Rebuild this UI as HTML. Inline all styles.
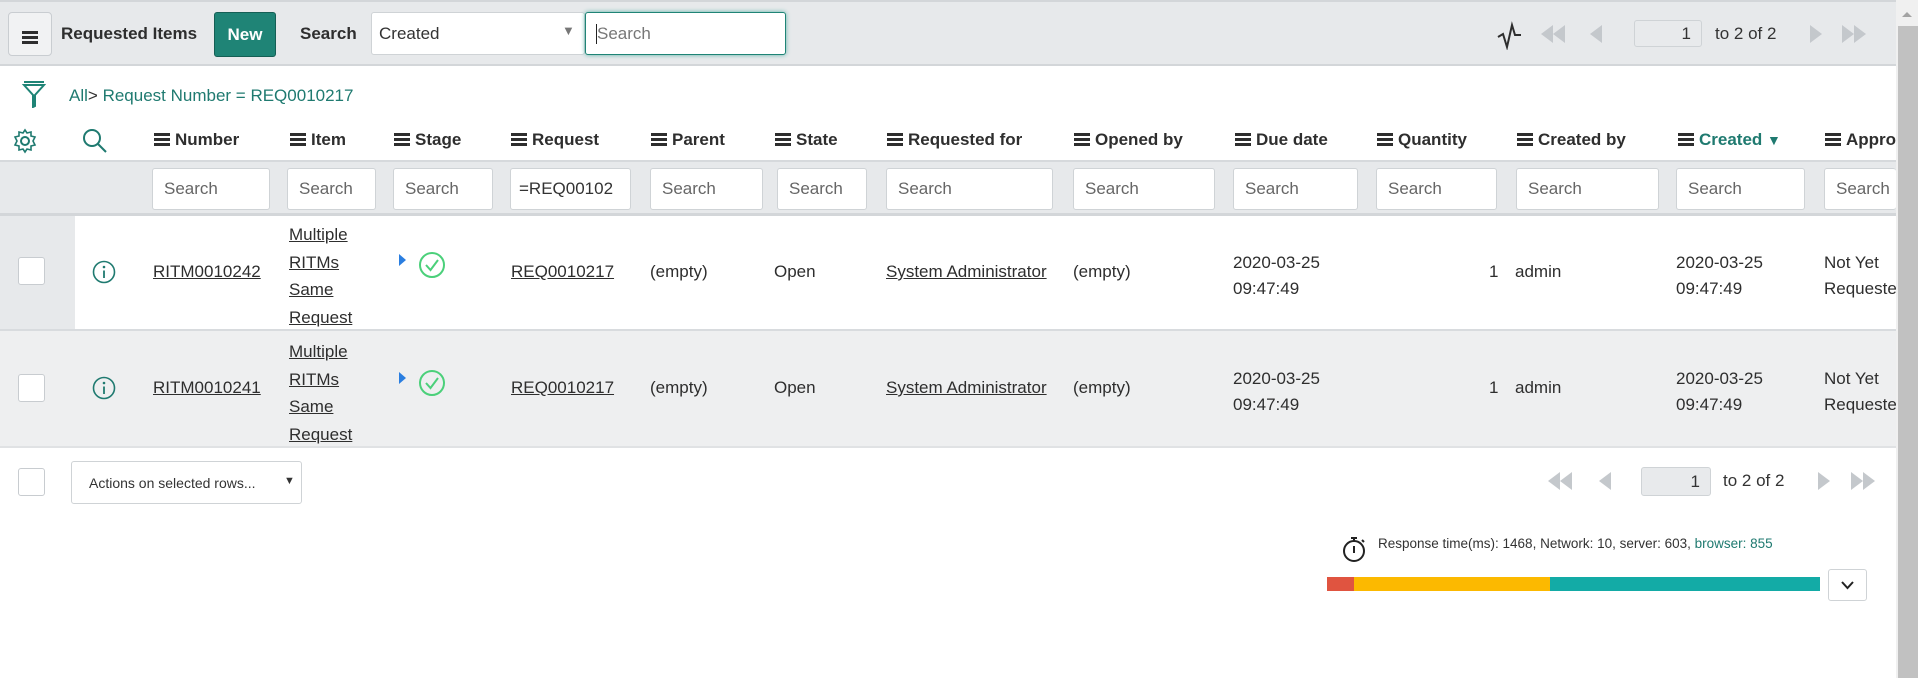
<!DOCTYPE html>
<html><head><meta charset="utf-8"><style>
*{box-sizing:border-box;margin:0;padding:0}
body{width:1918px;height:678px;overflow:hidden;background:#fff;font-family:"Liberation Sans",Arial,sans-serif;color:#2e2e2e;font-size:17px;position:relative}
.a{position:absolute;white-space:nowrap}
.inp{position:absolute;background:#fff;border:1px solid #cfd3d6;border-radius:3px;color:#666;font-size:17px;padding-left:11px;display:flex;align-items:center;white-space:nowrap}
.hb{display:inline-block;width:16px;height:13px;border-top:3px solid #2e2e2e;border-bottom:3px solid #2e2e2e;position:relative;margin-right:5px;vertical-align:-1px}
.hb:after{content:"";position:absolute;left:0;right:0;top:2px;height:3px;background:#2e2e2e}
.th{position:absolute;top:130px;font-weight:bold;font-size:17px;white-space:nowrap}
u{text-decoration:underline}
.cb{position:absolute;width:27px;height:28px;border:1px solid #c8ccd0;border-radius:3px;background:#fff}
.tri{position:absolute;width:0;height:0;border-top:9px solid transparent;border-bottom:9px solid transparent}
</style></head><body>
<!-- top bar -->
<div class="a" style="left:0;top:0;width:1896px;height:66px;background:#e7e9eb;border-top:2px solid #d3d6d9;border-bottom:2px solid #d3d6d9"></div>
<div class="a" style="left:8px;top:12px;width:44px;height:44px;border:1px solid #c9cdd1;border-radius:4px;background:#f1f2f3"></div>
<div class="a" style="left:22px;top:28px"><span class="hb"></span></div>
<div class="a" style="left:61px;top:24px;font-weight:bold">Requested Items</div>
<div class="a" style="left:214px;top:12px;width:62px;height:45px;background:#1f8476;border:1px solid #155f55;border-radius:3px;color:#fff;font-weight:bold;display:flex;align-items:center;justify-content:center">New</div>
<div class="a" style="left:300px;top:24px;font-weight:bold">Search</div>
<div class="inp" style="left:371px;top:12px;width:214px;height:43px;color:#333;padding-left:7px">Created<span class="a" style="left:190px;top:10px;color:#777;font-size:13px">▼</span></div>
<div class="inp" style="left:585px;top:12px;width:201px;height:43px;border:1px solid #1f8476;box-shadow:0 0 5px #5bb3a8;color:#777;padding-left:10px"><span style="border-left:1px solid #222;height:20px;margin-right:0"></span>Search</div>
<svg class="a" style="left:1496px;top:20px" width="30" height="30" viewBox="0 0 30 30"><path d="M2 17 L7 14 L11 27 L16 5 L19 15 L25 15" fill="none" stroke="#2e2e2e" stroke-width="2"/></svg>
<div class="tri" style="left:1541px;top:25px;border-right:12px solid #c4c8cc"></div>
<div class="tri" style="left:1553px;top:25px;border-right:12px solid #c4c8cc"></div>
<div class="tri" style="left:1590px;top:25px;border-right:12px solid #c4c8cc"></div>
<div class="inp" style="left:1634px;top:20px;width:68px;height:27px;background:#e8eaec;justify-content:flex-end;padding-right:10px;color:#333">1</div>
<div class="a" style="left:1715px;top:24px;color:#333">to 2 of 2</div>
<div class="tri" style="left:1810px;top:25px;border-left:12px solid #c4c8cc"></div>
<div class="tri" style="left:1842px;top:25px;border-left:12px solid #c4c8cc"></div>
<div class="tri" style="left:1854px;top:25px;border-left:12px solid #c4c8cc"></div>
<!-- scrollbar -->
<div class="a" style="left:1896px;top:0;width:22px;height:678px;background:#f0f0f0"></div>
<div class="a" style="left:1898px;top:26px;width:20px;height:652px;background:#c1c1c1"></div>
<div class="a" style="left:1902px;top:12px;width:0;height:0;border-left:5px solid transparent;border-right:5px solid transparent;border-bottom:5px solid #a3a3a3"></div>
<!-- breadcrumb -->
<svg class="a" style="left:22px;top:80px" width="24" height="28" viewBox="0 0 24 28"><path d="M2 2 H22 M2 5 H22 L13 15 V26 L11 27 V15 Z" fill="none" stroke="#1f8476" stroke-width="2"/></svg>
<div class="a" style="left:69px;top:86px;color:#1f7a70;font-size:17px">All<span style="color:#333">&gt;</span> Request Number = REQ0010217</div>
<!-- header -->
<svg class="a" style="left:12px;top:128px" width="26" height="26" viewBox="0 0 26 26"><circle cx="13" cy="13" r="4" fill="none" stroke="#1f7a70" stroke-width="2"/><path d="M13 2 L15 5 L19 4 L19 8 L23 9 L21 13 L23 17 L19 18 L19 22 L15 21 L13 24 L11 21 L7 22 L7 18 L3 17 L5 13 L3 9 L7 8 L7 4 L11 5 Z" fill="none" stroke="#1f7a70" stroke-width="1.6"/></svg>
<svg class="a" style="left:81px;top:127px" width="28" height="28" viewBox="0 0 28 28"><circle cx="11" cy="11" r="8" fill="none" stroke="#1f7a70" stroke-width="2"/><path d="M17 17 L25 25" stroke="#1f7a70" stroke-width="2"/></svg>
<div class="th" style="left:154px"><span class="hb"></span>Number</div>
<div class="th" style="left:290px"><span class="hb"></span>Item</div>
<div class="th" style="left:394px"><span class="hb"></span>Stage</div>
<div class="th" style="left:511px"><span class="hb"></span>Request</div>
<div class="th" style="left:651px"><span class="hb"></span>Parent</div>
<div class="th" style="left:775px"><span class="hb"></span>State</div>
<div class="th" style="left:887px"><span class="hb"></span>Requested for</div>
<div class="th" style="left:1074px"><span class="hb"></span>Opened by</div>
<div class="th" style="left:1235px"><span class="hb"></span>Due date</div>
<div class="th" style="left:1377px"><span class="hb"></span>Quantity</div>
<div class="th" style="left:1517px"><span class="hb"></span>Created by</div>
<div class="th" style="left:1678px;color:#1f7a70"><span class="hb"></span>Created <span style="font-size:14px">▼</span></div>
<div class="th" style="left:1825px;width:71px;overflow:hidden"><span class="hb"></span>Approval</div>
<!-- filter row -->
<div class="a" style="left:0;top:160px;width:1896px;height:56px;background:#e7e9eb;border-top:2px solid #d6d9dc;border-bottom:3px solid #d3d6d9"></div>
<div class="inp" style="left:152px;top:168px;width:118px;height:42px">Search</div>
<div class="inp" style="left:287px;top:168px;width:89px;height:42px">Search</div>
<div class="inp" style="left:393px;top:168px;width:100px;height:42px">Search</div>
<div class="inp" style="left:510px;top:168px;width:121px;height:42px;color:#333;padding-left:8px;overflow:hidden">=REQ00102</div>
<div class="inp" style="left:650px;top:168px;width:113px;height:42px">Search</div>
<div class="inp" style="left:777px;top:168px;width:90px;height:42px">Search</div>
<div class="inp" style="left:886px;top:168px;width:167px;height:42px">Search</div>
<div class="inp" style="left:1073px;top:168px;width:142px;height:42px">Search</div>
<div class="inp" style="left:1233px;top:168px;width:125px;height:42px">Search</div>
<div class="inp" style="left:1376px;top:168px;width:121px;height:42px">Search</div>
<div class="inp" style="left:1516px;top:168px;width:143px;height:42px">Search</div>
<div class="inp" style="left:1676px;top:168px;width:129px;height:42px">Search</div>
<div class="inp" style="left:1824px;top:168px;width:72px;height:42px;overflow:hidden;border-right:none">Search</div>
<!-- rows -->
<div class="a" style="left:0;top:216px;width:75px;height:114px;background:#e7e9eb"></div>
<div class="a" style="left:0;top:329px;width:1896px;height:2px;background:#d8dbde"></div>
<div class="a" style="left:0;top:331px;width:1896px;height:115px;background:#eeeff0"></div>
<div class="a" style="left:0;top:446px;width:1896px;height:2px;background:#e0e2e4"></div>

<div class="cb" style="left:18px;top:257px"></div>
<div class="cb" style="left:18px;top:374px"></div>
<svg class="a" style="left:92px;top:260px" width="24" height="24" viewBox="0 0 24 24"><circle cx="12" cy="12" r="10.5" fill="none" stroke="#1f7a70" stroke-width="1.6"/><circle cx="12" cy="7" r="1.3" fill="#1f7a70"/><path d="M12 10.5V18" stroke="#1f7a70" stroke-width="1.8"/></svg>
<svg class="a" style="left:92px;top:376px" width="24" height="24" viewBox="0 0 24 24"><circle cx="12" cy="12" r="10.5" fill="none" stroke="#1f7a70" stroke-width="1.6"/><circle cx="12" cy="7" r="1.3" fill="#1f7a70"/><path d="M12 10.5V18" stroke="#1f7a70" stroke-width="1.8"/></svg>

<div class="a" style="left:153px;top:262px"><u>RITM0010242</u></div>
<div class="a" style="left:289px;top:221px;line-height:27.5px"><u>Multiple</u><br><u>RITMs</u><br><u>Same</u><br><u>Request</u></div>
<div class="a" style="left:399px;top:254px;border-top:6px solid transparent;border-bottom:6px solid transparent;border-left:7px solid #2a7ee0"></div>
<svg class="a" style="left:418px;top:251px" width="28" height="28" viewBox="0 0 28 28"><circle cx="14" cy="14" r="12" fill="none" stroke="#4bd07a" stroke-width="2"/><path d="M8 14 L12.5 19 L20 9" fill="none" stroke="#4bd07a" stroke-width="2"/></svg>
<div class="a" style="left:511px;top:262px"><u>REQ0010217</u></div>
<div class="a" style="left:650px;top:262px">(empty)</div>
<div class="a" style="left:774px;top:262px">Open</div>
<div class="a" style="left:886px;top:262px"><u>System Administrator</u></div>
<div class="a" style="left:1073px;top:262px">(empty)</div>
<div class="a" style="left:1233px;top:250px;line-height:26px">2020-03-25<br>09:47:49</div>
<div class="a" style="left:1489px;top:262px">1</div>
<div class="a" style="left:1515px;top:262px">admin</div>
<div class="a" style="left:1676px;top:250px;line-height:26px">2020-03-25<br>09:47:49</div>
<div class="a" style="left:1824px;top:250px;line-height:26px;width:72px;overflow:hidden">Not Yet<br>Requested</div>

<div class="a" style="left:153px;top:378px"><u>RITM0010241</u></div>
<div class="a" style="left:289px;top:338px;line-height:27.5px"><u>Multiple</u><br><u>RITMs</u><br><u>Same</u><br><u>Request</u></div>
<div class="a" style="left:399px;top:372px;border-top:6px solid transparent;border-bottom:6px solid transparent;border-left:7px solid #2a7ee0"></div>
<svg class="a" style="left:418px;top:369px" width="28" height="28" viewBox="0 0 28 28"><circle cx="14" cy="14" r="12" fill="none" stroke="#4bd07a" stroke-width="2"/><path d="M8 14 L12.5 19 L20 9" fill="none" stroke="#4bd07a" stroke-width="2"/></svg>
<div class="a" style="left:511px;top:378px"><u>REQ0010217</u></div>
<div class="a" style="left:650px;top:378px">(empty)</div>
<div class="a" style="left:774px;top:378px">Open</div>
<div class="a" style="left:886px;top:378px"><u>System Administrator</u></div>
<div class="a" style="left:1073px;top:378px">(empty)</div>
<div class="a" style="left:1233px;top:366px;line-height:26px">2020-03-25<br>09:47:49</div>
<div class="a" style="left:1489px;top:378px">1</div>
<div class="a" style="left:1515px;top:378px">admin</div>
<div class="a" style="left:1676px;top:366px;line-height:26px">2020-03-25<br>09:47:49</div>
<div class="a" style="left:1824px;top:366px;line-height:26px;width:72px;overflow:hidden">Not Yet<br>Requested</div>

<!-- bottom -->
<div class="cb" style="left:18px;top:468px"></div>
<div class="inp" style="left:71px;top:461px;width:231px;height:43px;color:#333;font-size:14px;padding-left:17px">Actions on selected rows...<span class="a" style="left:212px;top:13px;font-size:11px">▼</span></div>
<div class="tri" style="left:1548px;top:472px;border-right:12px solid #c4c8cc"></div>
<div class="tri" style="left:1560px;top:472px;border-right:12px solid #c4c8cc"></div>
<div class="tri" style="left:1599px;top:472px;border-right:12px solid #c4c8cc"></div>
<div class="inp" style="left:1641px;top:467px;width:70px;height:29px;background:#e8eaec;justify-content:flex-end;padding-right:10px;color:#333">1</div>
<div class="a" style="left:1723px;top:471px;color:#333">to 2 of 2</div>
<div class="tri" style="left:1818px;top:472px;border-left:12px solid #c4c8cc"></div>
<div class="tri" style="left:1851px;top:472px;border-left:12px solid #c4c8cc"></div>
<div class="tri" style="left:1863px;top:472px;border-left:12px solid #c4c8cc"></div>

<svg class="a" style="left:1342px;top:534px" width="26" height="30" viewBox="0 0 26 30"><circle cx="12" cy="17" r="10" fill="none" stroke="#222" stroke-width="2"/><path d="M9 4 H15 M12 4 V7 M12 12 V19 M20 6 L22 8" stroke="#222" stroke-width="2"/></svg>
<div class="a" style="left:1378px;top:536px;font-size:13.5px;color:#333">Response time(ms): 1468, Network: 10, server: 603, <span style="color:#1f7a70">browser: 855</span></div>
<div class="a" style="left:1327px;top:577px;width:27px;height:14px;background:#e05440"></div>
<div class="a" style="left:1354px;top:577px;width:196px;height:14px;background:#fcb900"></div>
<div class="a" style="left:1550px;top:577px;width:270px;height:14px;background:#13aba6"></div>
<div class="a" style="left:1828px;top:569px;width:39px;height:32px;border:1px solid #cfd3d6;border-radius:3px;background:#fff"></div>
<svg class="a" style="left:1840px;top:580px" width="15" height="10" viewBox="0 0 15 10"><path d="M2 2 L7.5 8 L13 2" fill="none" stroke="#222" stroke-width="2"/></svg>
</body></html>
